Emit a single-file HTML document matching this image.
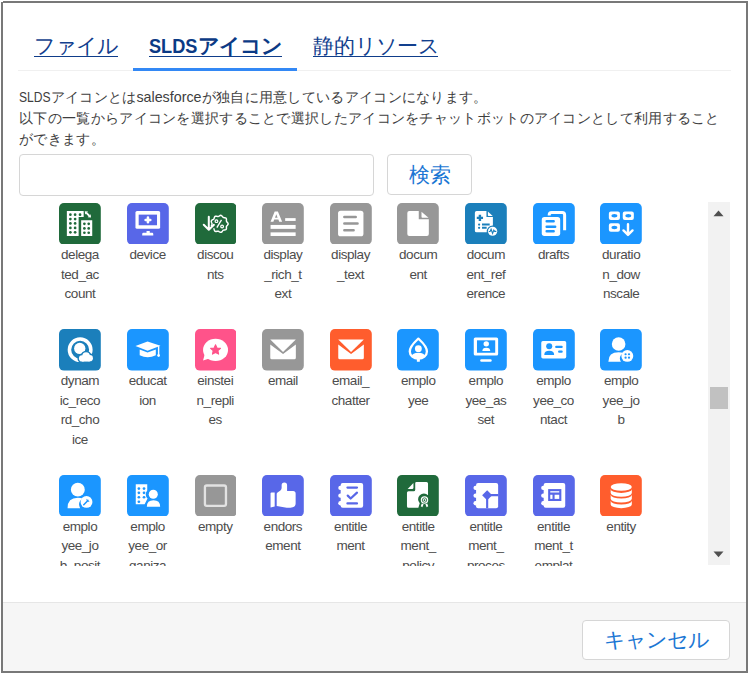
<!DOCTYPE html>
<html><head><meta charset="utf-8"><title>SLDS</title>
<style>
*{margin:0;padding:0;box-sizing:border-box}
i{font-style:normal;display:inline-block;width:1em;text-align:center}
.sl{display:inline-block;width:31.6px;transform:scaleX(.845);transform-origin:0 0}
.sl2{display:inline-block;width:48.5px;transform:scaleX(.865);transform-origin:0 0}
html,body{width:750px;height:676px;background:#fff;overflow:hidden;font-family:"Liberation Sans",sans-serif}
.frame{position:absolute;left:1px;top:1px;width:747px;height:672px;border:2px solid #787878;border-left:0;border-top:0}
.fl{position:absolute;left:1px;top:2px;width:2px;height:671px;background:#787878}
.ft{position:absolute;left:3px;top:1px;width:745px;height:2px;background:#787878}
.tab{position:absolute;top:32.5px;font-size:21px;line-height:26px;color:#12408e;white-space:nowrap}
.ul{position:absolute;top:55.6px;height:1.6px;background:#0f3d8a}
.sep{position:absolute;left:18px;top:70px;width:713px;height:1px;background:#f0f0f0}
.bar{position:absolute;left:133px;top:68px;width:164px;height:3px;background:#3388f5}
.desc{position:absolute;left:19px;top:87px;width:712px;font-size:14.3px;line-height:21.2px;color:#3e3e3e;white-space:nowrap}
.inp{position:absolute;left:19px;top:154px;width:355px;height:42px;border:1px solid #d6d6d6;border-radius:4px;background:#fff}
.btn{position:absolute;border:1px solid #d6d6d6;border-radius:4px;background:#fff;color:#1c77d4;text-align:center;white-space:nowrap}
.scroll{position:absolute;left:0;top:202px;width:708px;height:364px;overflow:hidden}
.ic{position:absolute;display:block}
.lab{position:absolute;width:71.5px;text-align:center;font-size:13.5px;line-height:19.5px;color:#4d4d4d;white-space:nowrap;letter-spacing:-0.45px}
.track{position:absolute;left:708px;top:202px;width:22px;height:363px;background:#f2f2f2}
.thumb{position:absolute;left:710px;top:387px;width:18px;height:22px;background:#c1c1c1}
.foot{position:absolute;left:3px;top:602px;width:743px;height:69px;background:#f6f6f6;border-top:1px solid #e6e6e6}
</style></head><body>
<div class="frame"></div><div class="fl"></div><div class="ft"></div>
<div class="tab" style="left:34px"><i>フ</i><i>ァ</i><i>イ</i><i>ル</i></div>
<div class="ul" style="left:34px;width:83.5px"></div>
<div class="tab" style="left:149px;font-weight:bold;color:#0b3a85"><span class="sl2">SLDS</span><i>ア</i><i>イ</i><i>コ</i><i>ン</i></div>
<div class="ul" style="left:149px;width:132.5px"></div>
<div class="tab" style="left:312.5px"><i>静</i><i>的</i><i>リ</i><i>ソ</i><i>ー</i><i>ス</i></div>
<div class="ul" style="left:312.5px;width:125px"></div>
<div class="sep"></div>
<div class="bar"></div>
<div class="desc"><span class="sl">SLDS</span><i>ア</i><i>イ</i><i>コ</i><i>ン</i><i>と</i><i>は</i>salesforce<i>が</i><i>独</i><i>自</i><i>に</i><i>用</i><i>意</i><i>し</i><i>て</i><i>い</i><i>る</i><i>ア</i><i>イ</i><i>コ</i><i>ン</i><i>に</i><i>な</i><i>り</i><i>ま</i><i>す</i><i>。</i><br><i>以</i><i>下</i><i>の</i><i>一</i><i>覧</i><i>か</i><i>ら</i><i>ア</i><i>イ</i><i>コ</i><i>ン</i><i>を</i><i>選</i><i>択</i><i>す</i><i>る</i><i>こ</i><i>と</i><i>で</i><i>選</i><i>択</i><i>し</i><i>た</i><i>ア</i><i>イ</i><i>コ</i><i>ン</i><i>を</i><i>チ</i><i>ャ</i><i>ッ</i><i>ト</i><i>ボ</i><i>ッ</i><i>ト</i><i>の</i><i>ア</i><i>イ</i><i>コ</i><i>ン</i><i>と</i><i>し</i><i>て</i><i>利</i><i>用</i><i>す</i><i>る</i><i>こ</i><i>と</i><br><i>が</i><i>で</i><i>き</i><i>ま</i><i>す</i><i>。</i></div>
<div class="inp"></div>
<div class="btn" style="left:387px;top:154px;width:85px;height:41px;font-size:21px;line-height:39px"><i>検</i><i>索</i></div>
<div class="scroll">
<svg class="ic" style="left:59.20px;top:0.90px" width="41.8" height="41.6" viewBox="0 0 41.5 41.5" preserveAspectRatio="none"><rect width="41.5" height="41.5" rx="4.9" fill="#206a3b"/><path fill="#fff" d="M7.8 8H24.5V14H19.5V32.9H7.8Z"/>
<path fill="#fff" d="M22 17.2H33V32.9H22Z"/>
<g fill="#206a3b">
<circle cx="11.3" cy="11.6" r="1.35"/><circle cx="16" cy="11.6" r="1.35"/><circle cx="20.9" cy="11.6" r="1.35"/>
<circle cx="11.3" cy="16" r="1.35"/><circle cx="16" cy="16" r="1.35"/>
<circle cx="11.3" cy="20.4" r="1.35"/><circle cx="16" cy="20.4" r="1.35"/>
<circle cx="11.3" cy="24.9" r="1.35"/><circle cx="16" cy="24.9" r="1.35"/>
<circle cx="11.3" cy="29.3" r="1.35"/><circle cx="16" cy="29.3" r="1.35"/>
<circle cx="25.2" cy="20.8" r="1.35"/><circle cx="29.5" cy="20.8" r="1.35"/>
<circle cx="25.2" cy="25.4" r="1.35"/><circle cx="29.5" cy="25.4" r="1.35"/>
<circle cx="25.2" cy="29.7" r="1.35"/><circle cx="29.5" cy="29.7" r="1.35"/>
</g>
<path stroke="#fff" stroke-width="1.9" d="M27.2 9.8L30.2 12.9"/>
<path fill="#fff" d="M25.6 8.2L28.9 8.6L26 11.5Z M31.8 14.5L28.5 14.1L31.4 11.2Z"/></svg><div class="lab" style="left:44.20px;top:43.00px">delega<br>ted_ac<br>count</div><svg class="ic" style="left:126.85px;top:0.90px" width="41.8" height="41.6" viewBox="0 0 41.5 41.5" preserveAspectRatio="none"><rect width="41.5" height="41.5" rx="4.9" fill="#5867e8"/><rect x="8.4" y="8" width="24.5" height="17.8" rx="1.6" fill="#fff"/>
<rect x="11.6" y="11.6" width="18.2" height="10.6" fill="#5867e8"/>
<path stroke="#fff" stroke-width="2.6" stroke-linecap="round" d="M20.8 14.6V19.2M18.5 16.9H23.1"/>
<path fill="#fff" d="M19.4 27.9H22.6V29.8H25Q26.1 29.8 26.1 31.1V32.5H15.1V31.1Q15.1 29.8 16.2 29.8H19.4Z"/></svg><div class="lab" style="left:111.85px;top:43.00px">device</div><svg class="ic" style="left:194.50px;top:0.90px" width="41.8" height="41.6" viewBox="0 0 41.5 41.5" preserveAspectRatio="none"><rect width="41.5" height="41.5" rx="4.9" fill="#206a3b"/><path stroke="#fff" stroke-width="2" fill="none" stroke-linecap="round" stroke-linejoin="round" d="M13.7 13.6V26.2M8.7 21.7L13.7 26.6L18.8 21.8"/>
<path stroke="#fff" stroke-width="1.45" fill="none" stroke-linecap="round" d="M16.29 22.50 L16.54 21.94 L16.77 21.41 L16.89 20.93 L16.86 20.45 L16.67 19.95 L16.42 19.41 L16.21 18.83 L16.14 18.25 L16.28 17.72 L16.62 17.28 L17.12 16.93 L17.67 16.66 L18.18 16.41 L18.57 16.11 L18.84 15.71 L19.02 15.20 L19.17 14.62 L19.39 14.04 L19.72 13.57 L20.18 13.27 L20.74 13.17 L21.34 13.23 L21.94 13.38 L22.48 13.51 L22.97 13.52 L23.43 13.37 L23.90 13.08 L24.39 12.74 L24.93 12.45 L25.49 12.31 L26.03 12.40 L26.52 12.70 L26.94 13.15 L27.29 13.64 L27.63 14.08 L28.00 14.39 L28.46 14.56 L29.00 14.63 L29.61 14.69 L30.21 14.82 L30.71 15.10 L31.05 15.52 L31.22 16.07 L31.24 16.69 L31.19 17.29 L31.17 17.84 L31.27 18.31 L31.52 18.73 L31.91 19.14 L32.33 19.58 L32.69 20.07 L32.88 20.60 L32.85 21.15 L32.61 21.67 L32.22 22.15 L31.79 22.58 L31.44 22.98 L31.23 23.41 L31.16 23.90 L31.20 24.47 L31.24 25.08 L31.19 25.68 L30.98 26.21 L30.59 26.59 L30.05 26.82 L29.44 26.93 L28.85 26.98 L28.32 27.07 L27.89 27.28 L27.53 27.63 L27.20 28.09 L26.83 28.58 L26.40 29.00 L25.89 29.25 L25.34 29.27 L24.78 29.09 L24.25 28.77 L23.77 28.43 L23.31 28.17 L22.84 28.07 L22.34 28.12 L21.78 28.26 L21.18 28.40 L20.58 28.43 L20.04 28.27 L19.62 27.92 L19.32 27.41 L19.13 26.82 L18.97 26.25 L18.78 25.77"/>
<circle cx="21.3" cy="18.1" r="1.35" fill="none" stroke="#fff" stroke-width="1.2"/>
<circle cx="26.9" cy="23.4" r="1.35" fill="none" stroke="#fff" stroke-width="1.2"/>
<path stroke="#fff" stroke-width="1.3" d="M26.3 16.8L21.7 24.6"/></svg><div class="lab" style="left:179.50px;top:43.00px">discou<br>nts</div><svg class="ic" style="left:262.15px;top:0.90px" width="41.8" height="41.6" viewBox="0 0 41.5 41.5" preserveAspectRatio="none"><rect width="41.5" height="41.5" rx="4.9" fill="#979797"/><path fill="#fff" fill-rule="evenodd" d="M12.6 8.4H15.8L20 18.7H17.1L16.3 16.5H12.1L11.3 18.7H8.5ZM14.2 11.2L12.9 14.6H15.5Z"/>
<rect x="23" y="15.1" width="10.4" height="2.8" fill="#fff"/>
<rect x="8.5" y="21.9" width="24.9" height="3.9" fill="#fff"/>
<rect x="8.5" y="29.3" width="24.9" height="3.6" fill="#fff"/></svg><div class="lab" style="left:247.15px;top:43.00px">display<br>_rich_t<br>ext</div><svg class="ic" style="left:329.80px;top:0.90px" width="41.8" height="41.6" viewBox="0 0 41.5 41.5" preserveAspectRatio="none"><rect width="41.5" height="41.5" rx="4.9" fill="#979797"/><rect x="8" y="7.7" width="25.2" height="25.5" rx="2.6" fill="#fff"/>
<path stroke="#979797" stroke-width="2.6" stroke-linecap="round" d="M14.3 14H25.5M14.3 20.4H27.3M14.3 27.2H23.4"/></svg><div class="lab" style="left:314.80px;top:43.00px">display<br>_text</div><svg class="ic" style="left:397.45px;top:0.90px" width="41.8" height="41.6" viewBox="0 0 41.5 41.5" preserveAspectRatio="none"><rect width="41.5" height="41.5" rx="4.9" fill="#979797"/><path fill="#fff" d="M12.2 8H21.6V16.2H31.6V31Q31.6 32.9 29.7 32.9H12.2Q10.25 32.9 10.25 31V10Q10.25 8 12.2 8Z"/>
<path fill="#fff" d="M24.3 8.7L31.3 14.6H25.2Q24.3 14.6 24.3 13.7Z"/></svg><div class="lab" style="left:382.45px;top:43.00px">docum<br>ent</div><svg class="ic" style="left:465.10px;top:0.90px" width="41.8" height="41.6" viewBox="0 0 41.5 41.5" preserveAspectRatio="none"><rect width="41.5" height="41.5" rx="4.9" fill="#1b7fbb"/><path fill="#fff" d="M11.5 8H21.3V13.9H27.7V22.5A6 6 0 0 0 21.6 29.3H11.5Q9.8 29.3 9.8 27.6V9.7Q9.8 8 11.5 8Z"/>
<path fill="#fff" d="M22.7 8.6L27.5 12.9H23.4Q22.7 12.9 22.7 12.2Z"/>
<path stroke="#1b7fbb" stroke-width="2.4" d="M14.8 11.7V17.9M11.7 14.8H17.9"/>
<circle cx="14" cy="21.5" r="1.1" fill="#1b7fbb"/><circle cx="14" cy="24.8" r="1.1" fill="#1b7fbb"/>
<path stroke="#1b7fbb" stroke-width="2" d="M16.9 21.5H24.5M16.9 24.8H21.5"/>
<circle cx="27.4" cy="28.2" r="4.6" fill="#fff"/>
<path stroke="#1b7fbb" stroke-width="1.1" fill="none" d="M23.6 28.4H24.9L25.9 26.2L27.4 30.4L28.6 27.1L29.5 28.3H31.1"/></svg><div class="lab" style="left:450.10px;top:43.00px">docum<br>ent_ref<br>erence</div><svg class="ic" style="left:532.75px;top:0.90px" width="41.8" height="41.6" viewBox="0 0 41.5 41.5" preserveAspectRatio="none"><rect width="41.5" height="41.5" rx="4.9" fill="#1b96ff"/><path fill="none" stroke="#fff" stroke-width="3" d="M16.1 14V11.9Q16.1 9.5 18.5 9.5H29Q31.4 9.5 31.4 11.9V27.2"/>
<rect x="8.7" y="14" width="18.3" height="18.9" rx="2.6" fill="#fff" stroke="#1b96ff" stroke-width="3" paint-order="stroke"/>
<path stroke="#1b96ff" stroke-width="2.5" stroke-linecap="round" d="M13.6 18.3H20.5M13.6 23.6H22M13.6 28.2H20.5"/></svg><div class="lab" style="left:517.75px;top:43.00px">drafts</div><svg class="ic" style="left:600.40px;top:0.90px" width="41.8" height="41.6" viewBox="0 0 41.5 41.5" preserveAspectRatio="none"><rect width="41.5" height="41.5" rx="4.9" fill="#1b96ff"/><g fill="#fff" fill-rule="evenodd">
<path d="M10.8 8.4H17.8Q19.8 8.4 19.8 10.4V15.0Q19.8 17.0 17.8 17.0H10.8Q8.8 17.0 8.8 15.0V10.4Q8.8 8.4 10.8 8.4Z M14.30 11.00A2.9 1.7 0 1 0 14.30 14.40A2.9 1.7 0 1 0 14.30 11.00Z"/>
<path d="M24.6 8.4H31.6Q33.6 8.4 33.6 10.4V15.0Q33.6 17.0 31.6 17.0H24.6Q22.6 17.0 22.6 15.0V10.4Q22.6 8.4 24.6 8.4Z M28.10 11.00A2.9 1.7 0 1 0 28.10 14.40A2.9 1.7 0 1 0 28.10 11.00Z"/>
<path d="M10.8 20.3H17.8Q19.8 20.3 19.8 22.3V26.700000000000003Q19.8 28.700000000000003 17.8 28.700000000000003H10.8Q8.8 28.700000000000003 8.8 26.700000000000003V22.3Q8.8 20.3 10.8 20.3Z M14.30 22.80A2.9 1.7 0 1 0 14.30 26.20A2.9 1.7 0 1 0 14.30 22.80Z"/>
</g>
<path stroke="#fff" stroke-width="2.4" fill="none" stroke-linecap="round" stroke-linejoin="round" d="M27.8 21.2V31.6M23.3 27.4L27.8 31.8L32.3 27.4"/></svg><div class="lab" style="left:585.40px;top:43.00px">duratio<br>n_dow<br>nscale</div><svg class="ic" style="left:59.20px;top:127.20px" width="41.8" height="41.6" viewBox="0 0 41.5 41.5" preserveAspectRatio="none"><rect width="41.5" height="41.5" rx="4.9" fill="#1b7fbb"/><circle cx="21" cy="20.65" r="10.65" fill="none" stroke="#fff" stroke-width="3.5"/>
<circle cx="20.6" cy="19.4" r="5.6" fill="#fff"/>
<g fill="#1b7fbb" stroke="#1b7fbb" stroke-width="3"><circle cx="22.9" cy="29.4" r="3.1"/><circle cx="26.9" cy="26.9" r="3.8"/><circle cx="30.6" cy="29.1" r="3.1"/><rect x="22.9" y="28" width="7.7" height="4.5"/></g>
<g fill="#fff"><circle cx="22.9" cy="29.4" r="3.1"/><circle cx="26.9" cy="26.9" r="3.8"/><circle cx="30.6" cy="29.1" r="3.1"/><rect x="22.9" y="28" width="7.7" height="4.5"/></g></svg><div class="lab" style="left:44.20px;top:169.30px">dynam<br>ic_reco<br>rd_cho<br>ice</div><svg class="ic" style="left:126.85px;top:127.20px" width="41.8" height="41.6" viewBox="0 0 41.5 41.5" preserveAspectRatio="none"><rect width="41.5" height="41.5" rx="4.9" fill="#1b96ff"/><path fill="#fff" d="M12.6 20.4L20.4 23.4L28.6 20.4V26.1Q20.6 30.3 12.6 26.1Z"/>
<path fill="#fff" d="M8.4 16.9L20.4 12.5L33.2 16.7L20.4 21.7Z"/>
<path stroke="#fff" stroke-width="1.4" d="M31.4 17V25"/>
<ellipse cx="31.4" cy="26.3" rx="1.3" ry="1.7" fill="#fff"/></svg><div class="lab" style="left:111.85px;top:169.30px">educat<br>ion</div><svg class="ic" style="left:194.50px;top:127.20px" width="41.8" height="41.6" viewBox="0 0 41.5 41.5" preserveAspectRatio="none"><rect width="41.5" height="41.5" rx="4.9" fill="#ff538a"/><ellipse cx="20.4" cy="20.85" rx="12.4" ry="11.2" fill="#fff"/>
<path fill="#fff" d="M9.6 25.5L8 31.5L15 29.3Z"/>
<path fill="#ff538a" stroke="#ff538a" stroke-width="1" stroke-linejoin="round" d="M20.40 15.70L21.87 18.88L25.35 19.29L22.78 21.67L23.46 25.11L20.40 23.40L17.34 25.11L18.02 21.67L15.45 19.29L18.93 18.88Z"/></svg><div class="lab" style="left:179.50px;top:169.30px">einstei<br>n_repli<br>es</div><svg class="ic" style="left:262.15px;top:127.20px" width="41.8" height="41.6" viewBox="0 0 41.5 41.5" preserveAspectRatio="none"><rect width="41.5" height="41.5" rx="4.9" fill="#979797"/><path fill="#fff" d="M8.2 10.5H33.6L20.9 23Z"/>
<path fill="#fff" d="M8.2 15.4L20.9 24.9L33.6 15.4V28.6Q33.6 30.1 32.1 30.1H9.7Q8.2 30.1 8.2 28.6Z"/></svg><div class="lab" style="left:247.15px;top:169.30px">email</div><svg class="ic" style="left:329.80px;top:127.20px" width="41.8" height="41.6" viewBox="0 0 41.5 41.5" preserveAspectRatio="none"><rect width="41.5" height="41.5" rx="4.9" fill="#ff5d2d"/><path fill="#fff" d="M8.2 10.5H33.6L20.9 23Z"/>
<path fill="#fff" d="M8.2 15.4L20.9 24.9L33.6 15.4V28.6Q33.6 30.1 32.1 30.1H9.7Q8.2 30.1 8.2 28.6Z"/></svg><div class="lab" style="left:314.80px;top:169.30px">email_<br>chatter</div><svg class="ic" style="left:397.45px;top:127.20px" width="41.8" height="41.6" viewBox="0 0 41.5 41.5" preserveAspectRatio="none"><rect width="41.5" height="41.5" rx="4.9" fill="#1b96ff"/><path fill="none" stroke="#fff" stroke-width="2.3" stroke-linejoin="round" d="M21.2 9.6C18.3 12.4 12.7 16.8 12.7 22.4C12.7 26.6 16.5 29.6 21.2 29.6C25.9 29.6 29.7 26.6 29.7 22.4C29.7 16.8 24.1 12.4 21.2 9.6Z"/>
<circle cx="21.2" cy="19.6" r="3.4" fill="#fff"/>
<path fill="#fff" d="M14.6 27.4Q15.2 23.8 21.2 23.8Q27.2 23.8 27.8 27.4Q25.4 29.6 21.2 29.6Q17 29.6 14.6 27.4Z"/>
<rect x="19.7" y="28.6" width="3" height="4.2" rx="0.6" fill="#fff"/></svg><div class="lab" style="left:382.45px;top:169.30px">emplo<br>yee</div><svg class="ic" style="left:465.10px;top:127.20px" width="41.8" height="41.6" viewBox="0 0 41.5 41.5" preserveAspectRatio="none"><rect width="41.5" height="41.5" rx="4.9" fill="#1b96ff"/><rect x="8.7" y="8.4" width="24.2" height="18.1" rx="1.6" fill="#fff"/>
<rect x="11.9" y="11.3" width="18.1" height="12.4" fill="#1b96ff"/>
<circle cx="21.1" cy="14.8" r="2.7" fill="#fff"/>
<path fill="#fff" d="M17.2 22Q17.2 18.6 21.1 18.6Q25.1 18.6 25.1 22Z"/>
<rect x="15.1" y="30.1" width="11.4" height="2.5" rx="1.2" fill="#fff"/></svg><div class="lab" style="left:450.10px;top:169.30px">emplo<br>yee_as<br>set</div><svg class="ic" style="left:532.75px;top:127.20px" width="41.8" height="41.6" viewBox="0 0 41.5 41.5" preserveAspectRatio="none"><rect width="41.5" height="41.5" rx="4.9" fill="#1b96ff"/><rect x="8.2" y="12" width="24.8" height="17.4" rx="1.6" fill="#fff"/>
<circle cx="16.1" cy="17.3" r="3" fill="#1b96ff"/>
<path fill="#1b96ff" d="M11.2 26Q11.2 21.8 16.1 21.8Q21 21.8 21 26Z"/>
<path stroke="#1b96ff" stroke-width="2.3" stroke-linecap="round" d="M23.1 17.9H28.4M26 22.6H28.4"/></svg><div class="lab" style="left:517.75px;top:169.30px">emplo<br>yee_co<br>ntact</div><svg class="ic" style="left:600.40px;top:127.20px" width="41.8" height="41.6" viewBox="0 0 41.5 41.5" preserveAspectRatio="none"><rect width="41.5" height="41.5" rx="4.9" fill="#1b96ff"/><circle cx="18.5" cy="15" r="6.75" fill="#fff"/>
<path fill="#fff" d="M8.3 32.6Q8.3 23.3 18.5 23.3Q21.3 23.3 23.3 24Q19.6 26.3 19.7 29.5Q19.8 31.4 20.8 32.6Z"/>
<circle cx="27.1" cy="26.9" r="5.9" fill="#fff"/>
<g fill="#1b96ff"><circle cx="25.4" cy="25.2" r="1.1"/><circle cx="28.8" cy="25.2" r="1.1"/><circle cx="25.4" cy="28.6" r="1.1"/><circle cx="28.8" cy="28.6" r="1.1"/></g></svg><div class="lab" style="left:585.40px;top:169.30px">emplo<br>yee_jo<br>b</div><svg class="ic" style="left:59.20px;top:272.70px" width="41.8" height="41.6" viewBox="0 0 41.5 41.5" preserveAspectRatio="none"><rect width="41.5" height="41.5" rx="4.9" fill="#1b96ff"/><circle cx="18.7" cy="14.6" r="6.9" fill="#fff"/>
<path fill="#fff" d="M8.5 33.1Q8.5 22.8 18.7 22.8Q21.5 22.8 23.5 23.5Q19.8 26 19.9 29.3Q20 31.6 21 33.1Z"/>
<circle cx="27.3" cy="26.9" r="5.9" fill="#fff"/>
<path stroke="#1b96ff" stroke-width="1.5" stroke-linecap="round" d="M24.6 29.6L28 26.2"/>
<path fill="#1b96ff" d="M27.4 23.6A2.3 2.3 0 0 0 30.4 26.6L29.4 25.6V24.6H28.4Z"/></svg><div class="lab" style="left:44.20px;top:314.80px">emplo<br>yee_jo<br>b_posit</div><svg class="ic" style="left:126.85px;top:272.70px" width="41.8" height="41.6" viewBox="0 0 41.5 41.5" preserveAspectRatio="none"><rect width="41.5" height="41.5" rx="4.9" fill="#1b96ff"/><path fill="#fff" d="M8.7 9.3H20.1V15.5A5.6 5.6 0 0 0 20.4 23.5L17.5 29.2H8.7Z"/>
<g fill="#1b96ff"><circle cx="11.8" cy="13.5" r="1.35"/><circle cx="16.9" cy="13.5" r="1.35"/><circle cx="11.8" cy="17.8" r="1.35"/><circle cx="16.9" cy="17.8" r="1.35"/><circle cx="11.8" cy="22.2" r="1.35"/><circle cx="16.9" cy="22.2" r="1.35"/><circle cx="11.8" cy="26.7" r="1.35"/></g>
<circle cx="26.1" cy="19.2" r="4.5" fill="#fff"/>
<path fill="#fff" d="M19.7 31.6Q19.7 25.2 26.3 25.2Q32.9 25.2 32.9 31.6Z"/></svg><div class="lab" style="left:111.85px;top:314.80px">emplo<br>yee_or<br>ganiza</div><svg class="ic" style="left:194.50px;top:272.70px" width="41.8" height="41.6" viewBox="0 0 41.5 41.5" preserveAspectRatio="none"><rect width="41.5" height="41.5" rx="4.9" fill="#979797"/><rect x="9.85" y="10.45" width="20.9" height="20.4" rx="1.8" fill="none" stroke="#e2e2e2" stroke-width="2.3"/></svg><div class="lab" style="left:179.50px;top:314.80px">empty</div><svg class="ic" style="left:262.15px;top:272.70px" width="41.8" height="41.6" viewBox="0 0 41.5 41.5" preserveAspectRatio="none"><rect width="41.5" height="41.5" rx="4.9" fill="#5867e8"/><path fill="#fff" d="M8.5 18.4Q8.5 17.4 9.5 17.4H12.6V31.4L8.5 32.4Z"/>
<path fill="#fff" d="M14.6 18.8Q14.6 18 15.4 17.4L18.3 15.4Q19.5 14.5 19.5 13V10.2A2.7 2.7 0 0 1 24.9 10.2V16H30.9Q33.4 16 33.4 18.5V28.5Q33.4 31.5 30.5 32.2Q27.5 32.9 24.5 32.7L14.6 31Z"/></svg><div class="lab" style="left:247.15px;top:314.80px">endors<br>ement</div><svg class="ic" style="left:329.80px;top:272.70px" width="41.8" height="41.6" viewBox="0 0 41.5 41.5" preserveAspectRatio="none"><rect width="41.5" height="41.5" rx="4.9" fill="#5867e8"/><rect x="10.6" y="7.9" width="22.3" height="24.8" rx="2" fill="#fff"/>
<rect x="8.20" y="10.75" width="5" height="4.3" rx="2.1" fill="#fff"/><rect x="8.20" y="18.45" width="5" height="4.3" rx="2.1" fill="#fff"/><rect x="8.20" y="26.05" width="5" height="4.3" rx="2.1" fill="#fff"/>
<path stroke="#5867e8" stroke-width="2.2" stroke-linecap="round" d="M17.3 12.5H26.8M17.3 28.4H26.8"/>
<path stroke="#5867e8" stroke-width="2.2" fill="none" stroke-linecap="round" stroke-linejoin="round" d="M17.6 20.6L20.5 23.5L26.8 17.6"/></svg><div class="lab" style="left:314.80px;top:314.80px">entitle<br>ment</div><svg class="ic" style="left:397.45px;top:272.70px" width="41.8" height="41.6" viewBox="0 0 41.5 41.5" preserveAspectRatio="none"><rect width="41.5" height="41.5" rx="4.9" fill="#206a3b"/><path fill="#fff" d="M19.3 7.1H29.3Q30.8 7.1 30.8 8.6V20.2A5.4 5.4 0 0 0 22.6 28.3L21.2 32.7H11.4Q9.9 32.7 9.9 31.2V17.8Q9.9 16.3 11.4 16.3H16.6Q18.1 16.3 18.1 14.8V8.3Q18.1 7.1 19.3 7.1Z"/>
<path fill="#fff" d="M10.6 13.9L16.3 7.9V12.7Q16.3 13.9 15.1 13.9Z"/>
<circle cx="27.3" cy="25" r="3.7" fill="#fff"/>
<circle cx="27.3" cy="25" r="2.2" fill="none" stroke="#206a3b" stroke-width="0.8"/>
<circle cx="27.3" cy="25" r="0.9" fill="#206a3b"/>
<path fill="#fff" d="M24.6 28.4L26.4 29.2L25.2 32.3L23.6 31.3Z M30 28.4L28.2 29.2L29.4 32.3L31 31.3Z"/></svg><div class="lab" style="left:382.45px;top:314.80px">entitle<br>ment_<br>policy</div><svg class="ic" style="left:465.10px;top:272.70px" width="41.8" height="41.6" viewBox="0 0 41.5 41.5" preserveAspectRatio="none"><rect width="41.5" height="41.5" rx="4.9" fill="#5867e8"/><rect x="11" y="7.9" width="21.9" height="25.2" rx="2" fill="#fff"/>
<rect x="8.40" y="10.75" width="5" height="4.3" rx="2.1" fill="#fff"/><rect x="8.40" y="18.45" width="5" height="4.3" rx="2.1" fill="#fff"/><rect x="8.40" y="26.05" width="5" height="4.3" rx="2.1" fill="#fff"/>
<path fill="#5867e8" d="M22 15.1L27 20.1L22 25.1L17 20.1Z"/>
<path stroke="#5867e8" stroke-width="2.1" d="M25 20.1H33.2M22 23V33.2"/></svg><div class="lab" style="left:450.10px;top:314.80px">entitle<br>ment_<br>proces</div><svg class="ic" style="left:532.75px;top:272.70px" width="41.8" height="41.6" viewBox="0 0 41.5 41.5" preserveAspectRatio="none"><rect width="41.5" height="41.5" rx="4.9" fill="#5867e8"/><rect x="10.6" y="7.9" width="21.4" height="24.8" rx="2" fill="#fff"/>
<rect x="8.10" y="10.75" width="5" height="4.3" rx="2.1" fill="#fff"/><rect x="8.10" y="18.45" width="5" height="4.3" rx="2.1" fill="#fff"/><rect x="8.10" y="26.05" width="5" height="4.3" rx="2.1" fill="#fff"/>
<rect x="16.1" y="15.1" width="11" height="9.8" fill="none" stroke="#5867e8" stroke-width="2.1"/>
<path stroke="#5867e8" stroke-width="2.1" d="M16.1 18.6H27.1M20.4 18.6V25"/></svg><div class="lab" style="left:517.75px;top:314.80px">entitle<br>ment_t<br>emplat</div><svg class="ic" style="left:600.40px;top:272.70px" width="41.8" height="41.6" viewBox="0 0 41.5 41.5" preserveAspectRatio="none"><rect width="41.5" height="41.5" rx="4.9" fill="#ff5d2d"/><ellipse cx="21.1" cy="12" rx="10.5" ry="3.8" fill="#fff"/>
<path fill="#fff" d="M10.6 14.1A10.5 3.75 0 0 0 31.6 14.1V17.95A10.5 3.75 0 0 1 10.6 17.95Z"/>
<path fill="#fff" d="M10.6 19.75A10.5 3.75 0 0 0 31.6 19.75V23.75A10.5 3.75 0 0 1 10.6 23.75Z"/>
<path fill="#fff" d="M10.6 25.75A10.5 3.75 0 0 0 31.6 25.75V29.35A10.5 3.75 0 0 1 10.6 29.35Z"/></svg><div class="lab" style="left:585.40px;top:314.80px">entity</div>
</div>
<div class="track"></div>
<svg style="position:absolute;left:713px;top:210px" width="11" height="7" viewBox="0 0 11 7"><path d="M0.5 6.3L5.5 0.6L10.5 6.3Z" fill="#505050"/></svg>
<svg style="position:absolute;left:713px;top:551px" width="11" height="7" viewBox="0 0 11 7"><path d="M0.5 0.6L5.5 6.3L10.5 0.6Z" fill="#505050"/></svg>
<div class="thumb"></div>
<div class="foot"></div>
<div class="btn" style="left:582px;top:620px;width:148px;height:40px;font-size:21px;line-height:38px"><i>キ</i><i>ャ</i><i>ン</i><i>セ</i><i>ル</i></div>
</body></html>
